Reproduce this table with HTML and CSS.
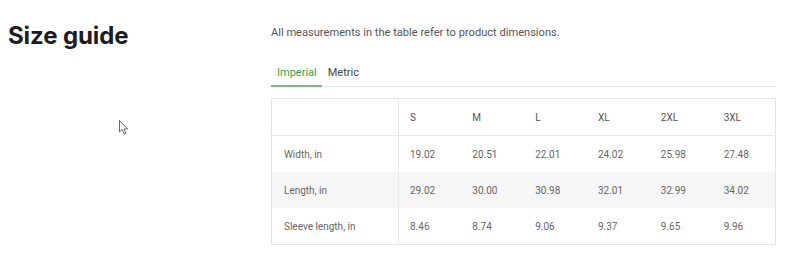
FILE: index.html
```html
<!DOCTYPE html>
<html lang="en">
<head>
<meta charset="utf-8">
<title>Size guide</title>
<link rel="stylesheet" href="styles.css">
</head>
<body>
<div class="page">
  <div class="side">
    <h1 class="title">Size guide</h1>
  </div>
  <div class="main">
    <p class="desc">All measurements in the table refer to product dimensions.</p>
    <div class="tabs">
      <span class="tab active">Imperial</span>
      <span class="tab">Metric</span>
    </div>
    <table class="sizes">
      <thead>
        <tr><th class="label"></th><th>S</th><th>M</th><th>L</th><th>XL</th><th>2XL</th><th>3XL</th></tr>
      </thead>
      <tbody>
        <tr><td class="label">Width, in</td><td>19.02</td><td>20.51</td><td>22.01</td><td>24.02</td><td>25.98</td><td>27.48</td></tr>
        <tr class="alt"><td class="label">Length, in</td><td>29.02</td><td>30.00</td><td>30.98</td><td>32.01</td><td>32.99</td><td>34.02</td></tr>
        <tr><td class="label">Sleeve length, in</td><td>8.46</td><td>8.74</td><td>9.06</td><td>9.37</td><td>9.65</td><td>9.96</td></tr>
      </tbody>
    </table>
  </div>
  <svg class="cursor" width="10" height="16" viewBox="0 0 10 16"><path d="M0.5 0.5 L0.5 12 L3.2 9.6 L5.2 14.3 L6.9 13.6 L5 9 L8.6 9 Z" fill="#fff" stroke="#444" stroke-width="0.8" stroke-linejoin="round"/></svg>
</div>
</body>
</html>
```
FILE: styles.css
```css
html, body {
  margin: 0;
  padding: 0;
  background: #fff;
}
body {
  font-family: Roboto, "Liberation Sans", sans-serif;
  color: #555;
}
.page {
  position: relative;
  display: flex;
  width: 794px;
  height: 271px;
}
.side {
  width: 271px;
  flex: none;
}
.title {
  margin: 0;
  padding: 22px 0 0 8px;
  font-family: Inter, "Liberation Sans", sans-serif;
  font-weight: 700;
  font-size: 24px;
  line-height: 28px;
  color: #1b1d21;
  letter-spacing: -0.1px;
}
.main {
  width: 505px;
  flex: none;
  padding-top: 25px;
}
.desc {
  margin: 0;
  font-size: 11.1px;
  line-height: 16px;
  color: #555;
}
.tabs {
  display: flex;
  margin-top: 19px;
  border-bottom: 1px solid #e8e8e8;
}
.tab {
  padding: 0 5px 0 6px;
  font-size: 11px;
  line-height: 25px;
  color: #444;
  margin-bottom: -1px;
  border-bottom: 2px solid transparent;
}
.tab.active {
  color: #2fa14f;
  border-bottom-color: #6cc083;
}
.sizes {
  margin-top: 11px;
  width: 505px;
  border-collapse: collapse;
  border: 1px solid #e4e4e4;
  font-size: 10px;
  color: #666;
  table-layout: fixed;
}
.sizes th, .sizes td {
  text-align: left;
  font-weight: 400;
  height: 36px;
  padding: 0 0 0 11px;
}
.sizes th {
  color: #555;
  border-bottom: 1px solid #e8e8e8;
}
.sizes .label {
  width: 114px;
  padding-left: 12px;
  border-right: 1px solid #e8e8e8;
}
.sizes tr.alt td {
  background: #f6f6f6;
}
.cursor {
  position: absolute;
  left: 119px;
  top: 120px;
}
```
